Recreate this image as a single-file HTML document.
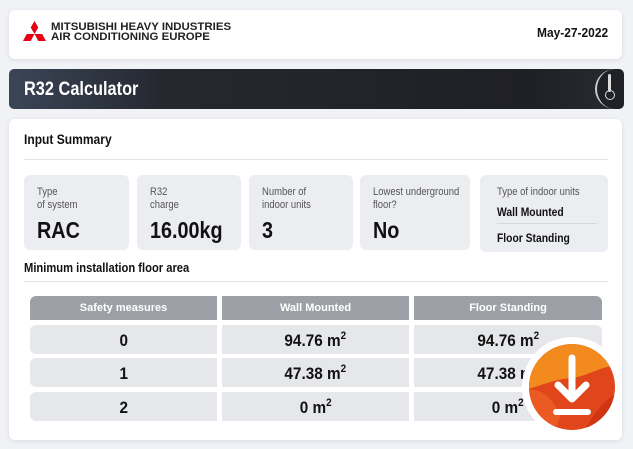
<!DOCTYPE html><html><head><style>
body{margin:0;width:633px;height:449px;background:#f1f2f6;font-family:"Liberation Sans",sans-serif;position:relative;overflow:hidden;color:#111}
.a{position:absolute}
.n{transform:scaleX(.86);transform-origin:0 0;white-space:nowrap}
.card{background:#fff;border-radius:6px;box-shadow:0 1px 4px rgba(80,90,130,.15)}
.box{position:absolute;top:175px;height:75px;background:#ecedf1;border-radius:6px}
.lbl{position:absolute;left:13px;top:11px;font-size:11px;color:#555;line-height:13px}
.val{position:absolute;left:13px;top:42px;font-size:23px;font-weight:bold}
.th{position:absolute;top:296px;height:24px;background:#9da0a6;color:#fff;font-size:11px;font-weight:bold;text-align:center;line-height:24px}
.td{position:absolute;height:29px;background:#e6e7ea;font-size:17px;font-weight:bold;text-align:center;line-height:31px}
.td span{display:inline-block;transform:scaleX(.9)}
sup{font-size:11px;vertical-align:7px;line-height:0}
</style></head><body>
<div class="a card" style="left:9px;top:10px;width:613px;height:49px"></div>
<svg class="a" style="left:21px;top:21px" width="27" height="24" viewBox="0 0 27 24"><g fill="#e60012"><polygon points="13.5,13 9.7,6.5 13.5,0 17.3,6.5"/><polygon points="13.5,13 21.2,13 25,20 17.3,20"/><polygon points="13.5,13 5.8,13 2,20 9.7,20"/></g></svg>
<div class="a" style="left:51px;top:23px;font-weight:bold;font-size:11px;line-height:9.5px;color:#222;transform:scaleX(1.04);transform-origin:0 0;white-space:nowrap">MITSUBISHI HEAVY INDUSTRIES<br>AIR CONDITIONING EUROPE</div>
<div class="a" style="left:537px;top:25px;font-size:13px;font-weight:bold;transform:scaleX(.92);transform-origin:0 0">May-27-2022</div>
<div class="a" style="left:9px;top:69px;width:613px;height:40px;border-radius:5px;background:linear-gradient(90deg,#3a4556 0%,#262830 25%,#1f2026 85%,#2a2b30 100%)"></div>
<div class="a" style="left:595px;top:69px;width:27px;height:40px;border-left:2px solid #ccc;border-radius:20px 5px 5px 20px;background:#202126"></div>
<div class="a" style="left:608px;top:74px;width:3px;height:18px;background:#ddd;border-radius:2px"></div>
<div class="a" style="left:605px;top:90px;width:8px;height:8px;border:1.5px solid #ddd;border-radius:50%"></div>
<div class="a n" style="left:24px;top:79px;font-size:19px;font-weight:bold;color:#fff">R32 Calculator</div>
<div class="a card" style="left:9px;top:119px;width:613px;height:321px"></div>
<div class="a n" style="left:24px;top:131px;font-size:14px;font-weight:bold">Input Summary</div>
<div class="a" style="left:24px;top:159px;width:584px;height:1px;background:#e2e3ea"></div>
<div class="box" style="left:24px;width:105px"><div class="lbl n">Type<br>of system</div><div class="val n">RAC</div></div>
<div class="box" style="left:137px;width:104px"><div class="lbl n">R32<br>charge</div><div class="val n">16.00kg</div></div>
<div class="box" style="left:249px;width:104px"><div class="lbl n">Number of<br>indoor units</div><div class="val n">3</div></div>
<div class="box" style="left:360px;width:110px"><div class="lbl n">Lowest underground<br>floor?</div><div class="val n">No</div></div>
<div class="box" style="left:480px;width:128px;height:77px"><div class="lbl n" style="left:17px">Type of indoor units</div>
<div class="a n" style="left:17px;top:30px;font-size:12px;font-weight:bold">Wall Mounted</div>
<div class="a" style="left:17px;top:48px;width:100px;height:1px;background:#d6d7dc"></div>
<div class="a n" style="left:17px;top:56px;font-size:12px;font-weight:bold">Floor Standing</div></div>
<div class="a n" style="left:24px;top:260px;font-size:13px;font-weight:bold">Minimum installation floor area</div>
<div class="a" style="left:24px;top:281px;width:584px;height:1px;background:#e2e3ea"></div>
<div class="th" style="left:30px;width:187px;border-radius:6px 0 0 0">Safety measures</div>
<div class="th" style="left:222px;width:187px">Wall Mounted</div>
<div class="th" style="left:414px;width:188px;border-radius:0 6px 0 0">Floor Standing</div>
<div class="td" style="left:30px;top:325px;width:187px;border-radius:6px 0 0 6px"><span>0</span></div>
<div class="td" style="left:222px;top:325px;width:187px"><span>94.76 m<sup>2</sup></span></div>
<div class="td" style="left:414px;top:325px;width:188px;border-radius:0 6px 6px 0"><span>94.76 m<sup>2</sup></span></div>
<div class="td" style="left:30px;top:358px;width:187px;border-radius:6px 0 0 6px"><span>1</span></div>
<div class="td" style="left:222px;top:358px;width:187px"><span>47.38 m<sup>2</sup></span></div>
<div class="td" style="left:414px;top:358px;width:188px;border-radius:0 6px 6px 0"><span>47.38 m<sup>2</sup></span></div>
<div class="td" style="left:30px;top:392px;width:187px;border-radius:6px 0 0 6px"><span>2</span></div>
<div class="td" style="left:222px;top:392px;width:187px"><span>0 m<sup>2</sup></span></div>
<div class="td" style="left:414px;top:392px;width:188px;border-radius:0 6px 6px 0"><span>0 m<sup>2</sup></span></div>
<svg class="a" style="left:521px;top:336px" width="102" height="102" viewBox="0 0 102 102">
<circle cx="51" cy="51" r="50" fill="#fff"/>
<defs><clipPath id="c"><circle cx="51" cy="51" r="43"/></clipPath></defs>
<g clip-path="url(#c)"><rect width="102" height="102" fill="#e0451c"/>
<path d="M0 0H102V30C80 28 70 40 50 42C30 44 20 50 0 55Z" fill="#f28a1e"/>
<path d="M0 55C20 50 30 60 40 80L30 102H0Z" fill="#ea5a22"/>
<path d="M60 102C70 80 85 60 102 55V102Z" fill="#cf3512"/></g>
<path d="M51 22V63M37 49L51 63L65 49" stroke="#fff" stroke-width="7" fill="none" stroke-linecap="round" stroke-linejoin="round"/>
<path d="M35 76H67" stroke="#fff" stroke-width="6" stroke-linecap="round"/>
</svg>
</body></html>
